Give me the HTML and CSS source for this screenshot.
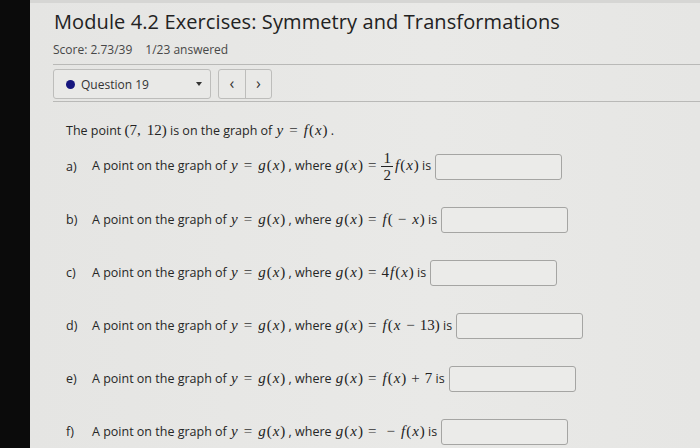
FILE: index.html
```html
<!DOCTYPE html>
<html>
<head>
<meta charset="utf-8">
<link rel="stylesheet" href="styles.css">
</head>
<body>
<div class="screen">
  <div class="bezel"></div>
  <div class="main">
    <h1 class="title">Module 4.2 Exercises: Symmetry and Transformations</h1>
    <div class="score"><span>Score: 2.73/39</span><span>1/23 answered</span></div>
    <div class="rule"></div>
    <div class="toolbar">
      <div class="qselect">
        <span class="dot"></span>
        <span class="qlabel">Question 19</span>
        <span class="caret"></span>
      </div>
      <div class="nav">
        <span class="navbtn">&lsaquo;</span>
        <span class="navbtn">&rsaquo;</span>
      </div>
    </div>
    <div class="rule"></div>
    <div class="content">
      <div class="intro">The point <span class="m">(7,&thinsp;&thinsp;12)</span> is on the graph of <span class="m"><i>y</i><span class="op">=</span><i>f</i>(<i>x</i>)</span> .</div>
      <ol class="items">
        <li class="item"><span class="lbl">a)</span><span class="txt">A point on the graph of <span class="m"><i>y</i><span class="op">=</span><i>g</i>(<i>x</i>)</span> , where <span class="m"><i>g</i>(<i>x</i>)<span class="op">=</span><span class="frac"><span class="num">1</span><span class="den">2</span></span><i>f</i>(<i>x</i>)</span> is</span><span class="box"></span></li>
        <li class="item"><span class="lbl">b)</span><span class="txt">A point on the graph of <span class="m"><i>y</i><span class="op">=</span><i>g</i>(<i>x</i>)</span> , where <span class="m"><i>g</i>(<i>x</i>)<span class="op">=</span><i>f</i>(<span class="op">&minus;</span><i>x</i>)</span> is</span><span class="box"></span></li>
        <li class="item"><span class="lbl">c)</span><span class="txt">A point on the graph of <span class="m"><i>y</i><span class="op">=</span><i>g</i>(<i>x</i>)</span> , where <span class="m"><i>g</i>(<i>x</i>)<span class="op">=</span>4<i>f</i>(<i>x</i>)</span> is</span><span class="box"></span></li>
        <li class="item"><span class="lbl">d)</span><span class="txt">A point on the graph of <span class="m"><i>y</i><span class="op">=</span><i>g</i>(<i>x</i>)</span> , where <span class="m"><i>g</i>(<i>x</i>)<span class="op">=</span><i>f</i>(<i>x</i><span class="op">&minus;</span>13)</span> is</span><span class="box"></span></li>
        <li class="item"><span class="lbl">e)</span><span class="txt">A point on the graph of <span class="m"><i>y</i><span class="op">=</span><i>g</i>(<i>x</i>)</span> , where <span class="m"><i>g</i>(<i>x</i>)<span class="op">=</span><i>f</i>(<i>x</i>)<span class="op">+</span>7</span> is</span><span class="box"></span></li>
        <li class="item"><span class="lbl">f)</span><span class="txt">A point on the graph of <span class="m"><i>y</i><span class="op">=</span><i>g</i>(<i>x</i>)</span> , where <span class="m"><i>g</i>(<i>x</i>)<span class="op">=</span><span class="op">&minus;</span><i>f</i>(<i>x</i>)</span> is</span><span class="box"></span></li>
      </ol>
    </div>
  </div>
</div>
</body>
</html>
```
FILE: styles.css
```css
html, body {
  margin: 0;
  padding: 0;
  background: #e7e7e5;
}
.screen {
  display: flex;
  width: 700px;
  height: 448px;
  overflow: hidden;
  font-family: "Open Sans", "Noto Sans", sans-serif;
  color: #2a2a2a;
}
.bezel {
  width: 30px;
  flex: none;
  background: #0b0b0b;
}
.main {
  flex: 1;
  padding-left: 23px;
  background: linear-gradient(90deg, #e5e5e3 0%, #e9e9e7 60%, #e6e6e4 100%);
  border-top: 3px solid #d6d6d4;
}
.title {
  margin: 6px 0 0 1px;
  font-size: 20px;
  font-weight: 400;
  line-height: 26px;
  color: #222;
  letter-spacing: 0.1px;
}
.score {
  margin-top: 7px;
  font-size: 12px;
  line-height: 16px;
  color: #474747;
  display: flex;
  gap: 13px;
}
.rule {
  height: 1px;
  background: #b9b9b7;
}
.score + .rule {
  margin-top: 6px;
}
.toolbar {
  display: flex;
  gap: 7px;
  margin-top: 4px;
  margin-bottom: 2px;
}
.qselect {
  height: 28px;
  border: 1px solid #bdbdbb;
  border-radius: 3px;
  background: #e9e9e7;
  display: flex;
  align-items: center;
  padding-left: 12px;
  width: 144px;
}
.dot {
  width: 9px;
  height: 9px;
  border-radius: 50%;
  background: #16167e;
  flex: none;
}
.qlabel {
  margin-left: 6px;
  font-size: 12px;
  color: #333;
  flex: 1;
}
.caret {
  width: 0;
  height: 0;
  border-left: 3px solid transparent;
  border-right: 3px solid transparent;
  border-top: 4px solid #333;
  margin-right: 8px;
}
.nav {
  display: flex;
  height: 28px;
  border: 1px solid #bdbdbb;
  border-radius: 3px;
  background: #e9e9e7;
}
.navbtn {
  width: 26px;
  display: flex;
  align-items: center;
  justify-content: center;
  font-size: 16px;
  color: #333;
  padding-bottom: 2px;
  box-sizing: border-box;
}
.navbtn + .navbtn {
  border-left: 1px solid #bdbdbb;
}
.content {
  padding: 18px 0 0 13px;
}
.intro {
  height: 20px;
  line-height: 20px;
  font-size: 12.5px;
  color: #262626;
}
.items {
  list-style: none;
  margin: 0;
  padding: 0;
}
.item {
  height: 53px;
  display: flex;
  align-items: center;
  font-size: 12.5px;
  color: #262626;
}
.lbl {
  width: 26px;
  flex: none;
}
.txt {
  white-space: nowrap;
}
.m {
  font-family: "Liberation Serif", "DejaVu Serif", serif;
  font-size: 15px;
  color: #222;
}
.m i {
  font-style: italic;
  padding: 0 1px;
}
.op {
  margin: 0 5px;
  color: #333;
}
.frac {
  display: inline-flex;
  flex-direction: column;
  align-items: center;
  vertical-align: middle;
  font-size: 15px;
  line-height: 14px;
  margin: 0 1px 0 0;
}
.num {
  border-bottom: 1px solid #222;
  padding: 0 2px 1px;
}
.den {
  padding-top: 1px;
}
.box {
  width: 125px;
  height: 24px;
  border: 1px solid #a5a5a3;
  border-radius: 3px;
  background: #ebebe9;
  margin-left: 4px;
  flex: none;
}
```
